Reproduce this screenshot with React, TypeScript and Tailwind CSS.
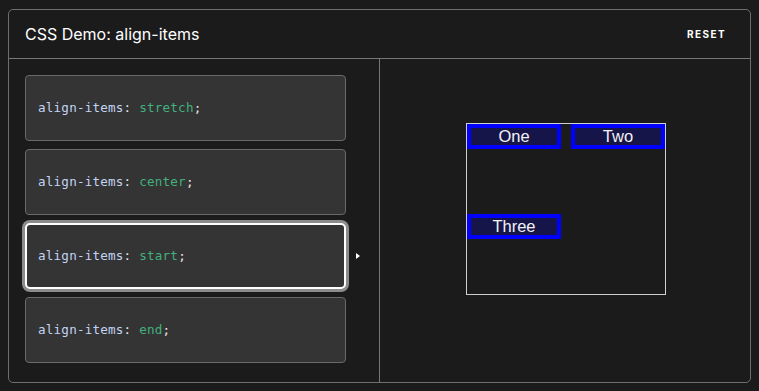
import React from 'react';

const choices = ['stretch', 'center', 'start', 'end'];

function Choice({ value, selected }: { value: string; selected?: boolean }) {
  return (
    <div className="flex items-center gap-0">
      <div
        className={
          selected
            ? 'flex h-[66px] w-[321px] items-center rounded-[5px] border-2 border-white bg-[#343434] pl-[11px] ring-[3px] ring-[#8c8c8c]'
            : 'flex h-[66px] w-[321px] items-center rounded-[4px] border border-[#6a6a6a] bg-[#343434] pl-3'
        }
      >
        <code className="font-['DejaVu_Sans_Mono',monospace] text-[12.6px] tracking-[0.2px] text-[#c3d3f3]">
          align-items<span className="text-[#e6e6e6]">:</span>{' '}
          <span className="text-[#43b07e]">{value}</span>
          <span className="text-[#e6e6e6]">;</span>
        </code>
      </div>
      {selected && (
        <div className="ml-[10px] h-0 w-0 border-y-[3.5px] border-l-[4px] border-y-transparent border-l-white" />
      )}
    </div>
  );
}

function Item({ label }: { label: string }) {
  return (
    <div className="border-4 border-[#0000ff] bg-[#15154a] text-center font-['Liberation_Sans',Arial,sans-serif] text-[16.5px] leading-[17px] text-[#f2f2f2]">
      {label}
    </div>
  );
}

export default function App() {
  return (
    <div className="h-[391px] w-[759px] bg-[#1b1b1b] px-2 pb-2 pt-[9px] font-['Inter',sans-serif]">
      <div className="flex h-full flex-col rounded-[5px] border border-[#6e6e6e]">
        {/* Header */}
        <div className="flex h-[49px] items-center justify-between border-b border-[#777] pl-4 pr-[24px]">
          <h2 className="text-[16px] text-white">CSS Demo: align-items</h2>
          <button className="text-[10px] font-bold tracking-[0.14em] text-white">RESET</button>
        </div>

        {/* Body */}
        <div className="flex flex-1">
          <div className="flex w-[371px] flex-col gap-2 border-r border-[#777] pl-4 pt-4">
            {choices.map((c) => (
              <Choice key={c} value={c} selected={c === 'start'} />
            ))}
          </div>
          <div className="flex flex-1 justify-center pl-[2px] pt-[64px]">
            <div className="grid h-[172px] w-[200px] grid-cols-2 grid-rows-2 items-start gap-[10px] border border-[#cfcfcf]">
              <Item label="One" />
              <Item label="Two" />
              <Item label="Three" />
            </div>
          </div>
        </div>
      </div>
    </div>
  );
}
